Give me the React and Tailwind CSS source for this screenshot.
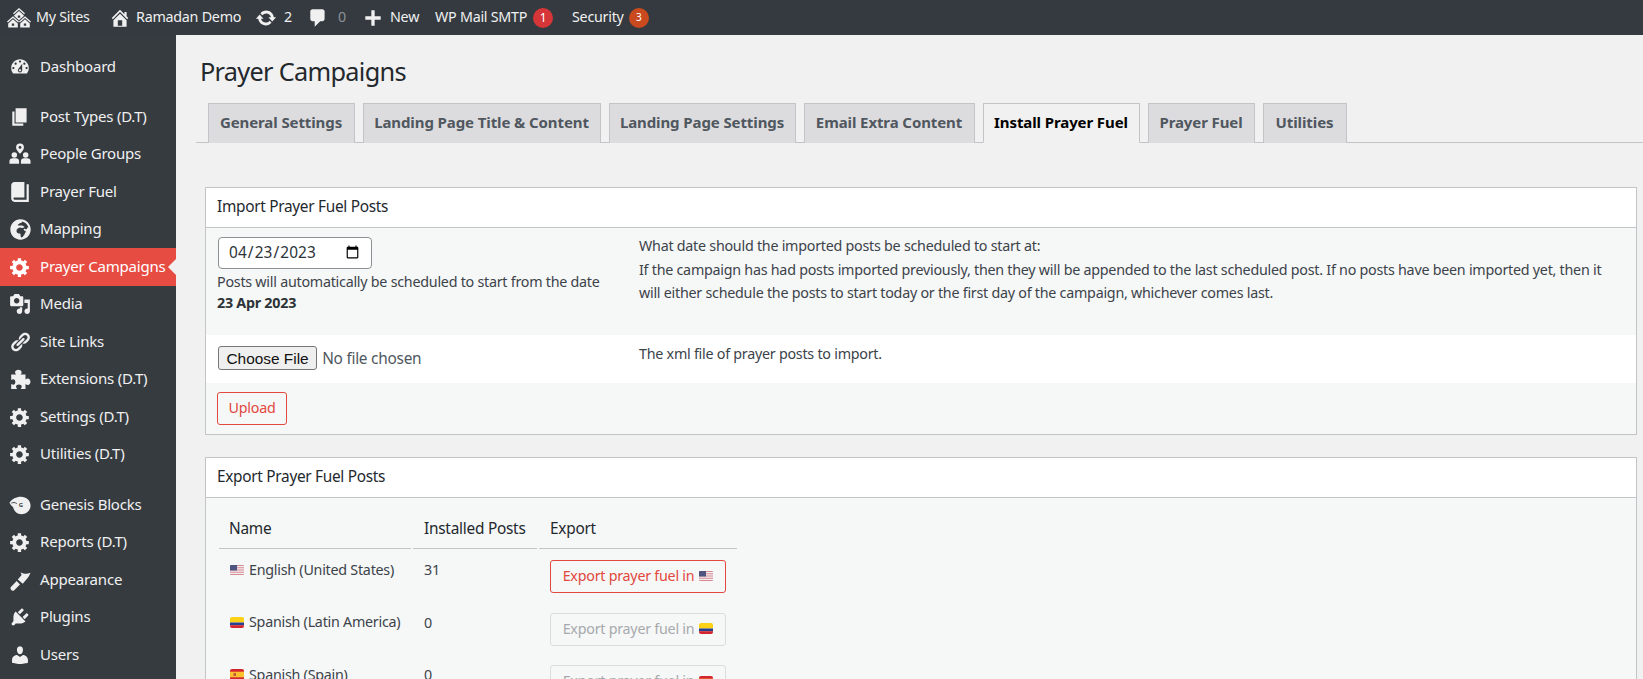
import React from "react";
import { FaGlobeAfrica } from "react-icons/fa";

const P = {
  multisite: "M14.27 6.87L10 3.14 5.73 6.87 5 6.14l5-4.38 5 4.38zM14 8.42l-4.05 3.43L6 8.38v-.74l4-3.5 4 3.5v.78zM11 9.7V8H9v1.7h2zm-1.73 4.03L5 10 .73 13.73 0 13l5-4.38L10 13zm10 0L15 10l-4.27 3.73L10 13l5-4.38L20 13zM5 11l4 3.5V18H1v-3.5zm10 0l4 3.5V18h-8v-3.5zM6 14.5H4v2h2v-2zm10 0h-2v2h2v-2z",
  home: "M16 8.5l1.53 1.53-1.06 1.06L10 4.62l-6.47 6.47-1.06-1.06L10 2.5l4 4v-2h2v4zm-6-2.46l6 5.99V18H4v-5.97zM12 17v-5H8v5h4z",
  update: "M10.2 3.28c3.53 0 6.43 2.61 6.92 6h2.08l-3.5 4-3.5-4h2.32c-.45-1.97-2.21-3.45-4.32-3.45-1.45 0-2.73.71-3.54 1.78L4.95 5.66C6.23 4.2 8.11 3.28 10.2 3.28zm-.4 13.44c-3.52 0-6.43-2.61-6.92-6H.8l3.5-4c1.17 1.33 2.33 2.67 3.5 4H5.48c.45 1.97 2.21 3.45 4.32 3.45 1.45 0 2.73-.71 3.54-1.78l1.71 1.95c-1.28 1.46-3.15 2.38-5.25 2.38z",
  comment: "M5 2h9c1.1 0 2 .9 2 2v7c0 1.1-.9 2-2 2h-2l-5 5v-5H5c-1.1 0-2-.9-2-2V4c0-1.1.9-2 2-2z",
  plus: "M17 8.5v3h-5.5V17h-3v-5.5H3v-3h5.5V3h3v5.5z",
  dashboard: "M3.76 16h12.48c1.1-1.37 1.76-3.11 1.76-5 0-4.42-3.58-8-8-8s-8 3.58-8 8c0 1.89.66 3.63 1.76 5zM10 4c.55 0 1 .45 1 1s-.45 1-1 1-1-.45-1-1 .45-1 1-1zM6 6c.55 0 1 .45 1 1s-.45 1-1 1-1-.45-1-1 .45-1 1-1zm8 0c.55 0 1 .45 1 1s-.45 1-1 1-1-.45-1-1 .45-1 1-1zm-5.37 5.55L12 7v6c0 1.1-.9 2-2 2s-2-.9-2-2c0-.57.24-1.08.63-1.45zM4 10c.55 0 1 .45 1 1s-.45 1-1 1-1-.45-1-1 .45-1 1-1zm12 0c.55 0 1 .45 1 1s-.45 1-1 1-1-.45-1-1 .45-1 1-1zm-5 3c0-.55-.45-1-1-1s-1 .45-1 1 .45 1 1 1 1-.45 1-1z",
  page: "M6 15V2h10v13H6zm-1 1h8v2H3V5h2v11z",
  book: "M16 3h2v16H5c-1.66 0-3-1.34-3-3V4c0-1.66 1.34-3 3-3h9v14H5c-.55 0-1 .45-1 1s.45 1 1 1h11V3z",
  gear: "M18 12h-2.18c-.17.7-.44 1.35-.81 1.93l1.54 1.54-2.1 2.1-1.54-1.54c-.58.36-1.23.63-1.91.79V19H8v-2.18c-.68-.16-1.33-.43-1.91-.79l-1.54 1.54-2.12-2.12 1.54-1.54c-.36-.58-.63-1.23-.79-1.91H1V9.03h2.17c.16-.7.44-1.35.8-1.94L2.43 5.55l2.1-2.1 1.54 1.54c.58-.37 1.24-.64 1.93-.81V2h3v2.18c.68.16 1.33.43 1.91.79l1.54-1.54 2.12 2.12-1.54 1.54c.36.59.64 1.24.8 1.94H18V12zm-8.5 1.5c1.66 0 3-1.34 3-3s-1.34-3-3-3-3 1.34-3 3 1.34 3 3 3z",
  media: "M13 11V4c0-.55-.45-1-1-1h-1.67L9 1H5L3.67 3H2c-.55 0-1 .45-1 1v7c0 .55.45 1 1 1h10c.55 0 1-.45 1-1zM7 4.5c1.38 0 2.5 1.12 2.5 2.5S8.38 9.5 7 9.5 4.5 8.38 4.5 7 5.62 4.5 7 4.5zM14 6h5v10.5c0 1.38-1.12 2.5-2.5 2.5S14 17.88 14 16.5s1.12-2.5 2.5-2.5c.17 0 .34.02.5.05V9h-3V6zm-4 8.05V13h2v3.5c0 1.38-1.12 2.5-2.5 2.5S7 17.88 7 16.5 8.12 14 9.5 14c.17 0 .34.02.5.05z",
  links: "M17.74 2.76c1.68 1.69 1.68 4.41 0 6.1l-1.53 1.52c-1.12 1.12-2.7 1.47-4.14 1.09l2.62-2.61.76-.77.76-.76c.84-.84.84-2.2 0-3.04-.84-.85-2.2-.85-3.04 0l-.77.76-3.38 3.38c-.37-1.44-.02-3.02 1.1-4.14l1.52-1.53c1.69-1.68 4.42-1.68 6.1 0zM8.59 13.43l5.34-5.34c.42-.42.42-1.1 0-1.52-.44-.43-1.13-.39-1.52 0l-5.34 5.34c-.42.42-.42 1.1 0 1.52.43.43 1.13.39 1.52 0zm-.76 2.29l4.14-4.15c.38 1.44.03 3.02-1.09 4.14l-1.52 1.53c-1.69 1.68-4.41 1.68-6.1 0-1.68-1.68-1.68-4.42 0-6.1l1.53-1.52c1.12-1.12 2.7-1.47 4.14-1.1l-4.14 4.15c-.85.84-.85 2.2 0 3.05.84.84 2.2.84 3.04 0z",
  plugin: "M13.11 4.36L9.87 7.6 8 5.73l3.24-3.24c.35-.34 1.05-.2 1.56.32.52.51.66 1.21.31 1.55zm-8 1.77l.91-1.12 9.01 9.01-1.19.84c-.71.71-2.63 1.16-3.82 1.16H6.14L4.9 17.26c-.59.59-1.54.59-2.12 0-.59-.58-.59-1.53 0-2.12l1.24-1.24v-3.88c0-1.13.52-3.13 1.09-3.89zm7.26 3.97l3.24-3.24c.34-.35 1.04-.21 1.55.31.52.51.66 1.21.31 1.56l-3.24 3.24z",
  user: "M10 9.25c-2.27 0-2.73-3.44-2.73-3.44C7 4.02 7.82 2 9.97 2c2.16 0 2.98 2.02 2.71 3.81 0 0-.41 3.44-2.68 3.44zm0 2.57L12.72 10c2.39 0 4.52 2.33 4.52 4.53v2.49s-3.65 1.13-7.24 1.13c-3.65 0-7.24-1.13-7.24-1.13v-2.49c0-2.25 1.94-4.48 4.56-4.48z",
  brush: "M1.5 16.5L7 11l3 3-5.5 5.5Q3 20 2 19 1 18 1.5 16.5zM8 9.5L11.5 5.5 10.5 3c3 1.500 5.500 2 9 .5-1 3-2.500 5-4.500 7l-2.500 3z",
  puzzle: "M2 6h4.500c-.7-.8-1-1.500-1-2.200C5.500 2.500 6.800 1.500 8.500 1.500s3 1 3 2.300c0 .7-.3 1.400-1 2.200H15v4.500c.8-.7 1.500-1 2.200-1 1.300 0 2.300 1.300 2.300 3s-1 3-2.300 3c-.7 0-1.400-.3-2.200-1V19h-4.300c.6-.8.9-1.500.9-2.100 0-1.200-1.100-1.900-2.600-1.900s-2.600.7-2.600 1.900c0 .6.3 1.300.9 2.100H2v-4.500c.8.5 1.300.7 1.800.7 1.200 0 2-1.100 2-2.500s-.8-2.500-2-2.500c-.5 0-1 .2-1.800.7z",
};

function Dash({ name, className = "w-[22px] h-[22px]" }) {
  return (
    <svg viewBox="0 0 20 20" fill="currentColor" className={className}>
      <path d={P[name]} />
    </svg>
  );
}

function PeopleIcon() {
  return (
    <svg viewBox="0 0 24 24" fill="currentColor" fillRule="evenodd" className="w-[22px] h-[22px]">
      <path d="M12 .5a4.3 4.3 0 0 1 4.3 4.3c0 2.4-2.5 5-4.3 7-1.8-2-4.3-4.6-4.3-7A4.3 4.3 0 0 1 12 .5zm0 2.7a1.6 1.6 0 1 0 0 3.2 1.6 1.6 0 0 0 0-3.2z" />
      <circle cx="5.8" cy="13" r="3" />
      <circle cx="18.2" cy="13" r="3" />
      <path d="M.5 22.500V20c0-2 1.500-3.300 3.500-3.300h3.600c2 0 3.400 1.300 3.400 3.300v2.500zM13 22.500V20c0-2 1.400-3.300 3.400-3.300H20c2 0 3.500 1.300 3.500 3.300v2.500z" />
    </svg>
  );
}

function GenesisIcon() {
  return (
    <svg viewBox="0 0 24 24" className="w-[22px] h-[22px]">
      <path fill="currentColor" d="M.5 9.500C3 5.500 8 3 13 3c6 0 10.500 4 10.500 9.500S19 22 13.500 22C9 22 5.500 19 4.500 14.500 3 13 1.500 11.500.5 9.500z" />
      <path fill="none" stroke="#363b40" strokeWidth="1" d="M2.500 10c2-1 4-1 6 .5" />
      <text x="13" y="14.500" fontSize="6.500" fontWeight="700" textAnchor="middle" fill="#363b40">G</text>
    </svg>
  );
}

function Flag({ code }) {
  if (code === "us") {
    return (
      <svg viewBox="0 0 14 10" className="w-[14px] h-[10px] shrink-0 rounded-[1px]">
        <rect width="14" height="10" fill="#f3eef0" />
        <path fill="#d88a92" d="M0 0h14v1.100H0zM0 2.200h14v1.100H0zM0 4.400h14v1.100H0zM0 6.700h14v1.100H0zM0 8.900h14V10H0z" />
        <rect width="7" height="5.500" fill="#4d5580" />
      </svg>
    );
  }
  if (code === "co") {
    return (
      <svg viewBox="0 0 14 11" className="w-[14px] h-[11px] shrink-0 rounded-[2px]">
        <rect width="14" height="5.500" fill="#fcd116" />
        <rect y="5.500" width="14" height="2.700" fill="#26418f" />
        <rect y="8.200" width="14" height="2.800" fill="#d3252f" />
      </svg>
    );
  }
  return (
    <svg viewBox="0 0 14 11" className="w-[14px] h-[11px] shrink-0 rounded-[2px]">
      <rect width="14" height="11" fill="#d3252f" />
      <rect y="2.700" width="14" height="5.600" fill="#fbc02d" />
      <rect x="3.500" y="4" width="2.500" height="3" fill="#c8553d" />
    </svg>
  );
}

const topItems = [
  { w: "w-[102px]", gap: "gap-[5px]", icon: "multisite", iconClass: "w-[24px] h-[24px]", label: "My Sites" },
  { w: "w-[146px]", gap: "gap-[5px]", icon: "home", iconClass: "w-[22px] h-[22px]", label: "Ramadan Demo" },
  { w: "w-[54px]", gap: "gap-[7px]", icon: "update", iconClass: "w-[22px] h-[22px]", label: "2" },
];

const menuTop = [
  { label: "Post Types (D.T)", icon: <Dash name="page" /> },
  { label: "People Groups", icon: <PeopleIcon /> },
  { label: "Prayer Fuel", icon: <Dash name="book" /> },
  { label: "Mapping", icon: <FaGlobeAfrica className="w-[21px] h-[21px]" /> },
  { label: "Prayer Campaigns", icon: <Dash name="gear" />, active: true },
  { label: "Media", icon: <Dash name="media" /> },
  { label: "Site Links", icon: <Dash name="links" /> },
  { label: "Extensions (D.T)", icon: <Dash name="puzzle" /> },
  { label: "Settings (D.T)", icon: <Dash name="gear" /> },
  { label: "Utilities (D.T)", icon: <Dash name="gear" /> },
];

const menuBottom = [
  { label: "Genesis Blocks", icon: <GenesisIcon /> },
  { label: "Reports (D.T)", icon: <Dash name="gear" /> },
  { label: "Appearance", icon: <Dash name="brush" /> },
  { label: "Plugins", icon: <Dash name="plugin" /> },
  { label: "Users", icon: <Dash name="user" /> },
];

const tabs = [
  { label: "General Settings", w: "w-[147px]" },
  { label: "Landing Page Title & Content", w: "w-[238px]" },
  { label: "Landing Page Settings", w: "w-[187px]" },
  { label: "Email Extra Content", w: "w-[171px]" },
  { label: "Install Prayer Fuel", w: "w-[157px]", active: true },
  { label: "Prayer Fuel", w: "w-[107px]" },
  { label: "Utilities", w: "w-[84px]" },
];

const languages = [
  { code: "us", name: "English (United States)", posts: "31", enabled: true },
  { code: "co", name: "Spanish (Latin America)", posts: "0" },
  { code: "es", name: "Spanish (Spain)", posts: "0" },
];

function MenuItem({ item }) {
  return (
    <div className={`flex items-center h-[37.5px] ${item.active ? "bg-[#e74c43] text-white" : ""}`}>
      <span className="w-[40px] flex justify-center shrink-0">{item.icon}</span>
      <span className="whitespace-nowrap pb-[2px]">{item.label}</span>
      {item.active && (
        <span className="ml-auto w-0 h-0 border-y-[8px] border-y-transparent border-r-[8px] border-r-[#f1f1f1]" />
      )}
    </div>
  );
}

function CardHeader({ children }) {
  return (
    <div className="h-[40px] flex items-center px-[11px] pb-[2px] bg-white border-b border-[#c3c4c7] text-[15.4px] tracking-[-0.3px] text-[#23282d]">
      {children}
    </div>
  );
}

export default function App() {
  return (
    <div className="h-[679px] overflow-hidden flex flex-col bg-[#f1f1f1] text-[14.3px] tracking-[-0.25px] text-[#3c434a] font-['Noto_Sans',sans-serif]">
      {/* admin bar */}
      <div className="h-[35px] shrink-0 flex items-center pl-[7px] bg-[#343a3f] text-[#f0f0f1]">
        {topItems.map((t) => (
          <div key={t.label} className={`${t.w} ${t.gap} flex items-center whitespace-nowrap`}>
            <Dash name={t.icon} className={t.iconClass} />
            <span className="pb-[2px]">{t.label}</span>
          </div>
        ))}
        <div className="w-[55px] flex items-center gap-[9px]">
          <Dash name="comment" className="w-[22px] h-[22px] -ml-[2px]" />
          <span className="pb-[2px] text-[#8c9096]">0</span>
        </div>
        <div className="w-[71px] flex items-center gap-[6px]">
          <Dash name="plus" className="w-[22px] h-[22px] -ml-[2px]" />
          <span className="pb-[2px]">New</span>
        </div>
        <div className="w-[137px] flex items-center gap-[6px] whitespace-nowrap">
          <span className="pb-[2px]">WP Mail SMTP</span>
          <span className="w-[20px] h-[20px] rounded-full bg-[#d63638] text-white text-[12px] flex items-center justify-center">1</span>
        </div>
        <div className="flex items-center gap-[5px]">
          <span className="pb-[2px]">Security</span>
          <span className="w-[20px] h-[20px] rounded-full bg-[#ca4a1f] text-white text-[10px] flex items-center justify-center">3</span>
        </div>
      </div>

      <div className="flex flex-1 min-h-0">
        {/* sidebar */}
        <aside className="w-[176px] shrink-0 bg-[#363b40] text-[#f0f0f1] text-[15px] tracking-[-0.2px] pt-[13px]">
          <MenuItem item={{ label: "Dashboard", icon: <Dash name="dashboard" /> }} />
          <div className="h-[12.5px]" />
          {menuTop.map((m) => (
            <MenuItem key={m.label} item={m} />
          ))}
          <div className="h-[13px]" />
          {menuBottom.map((m) => (
            <MenuItem key={m.label} item={m} />
          ))}
        </aside>

        {/* content */}
        <main className="flex-1 min-w-0 pl-[22px] pr-[6px]">
          <h1 className="h-[68px] flex items-center pl-[2px] pt-[6px] text-[25.3px] text-[#23282d] tracking-[-0.7px]">Prayer Campaigns</h1>

          <div className="flex gap-[8px] pl-[11.5px] -mr-[6px] -ml-[2px] h-[40px] border-b border-[#c3c4c7]">
            {tabs.map((t) => (
              <div
                key={t.label}
                className={`${t.w} h-[40px] pb-[2px] shrink-0 flex items-center justify-center whitespace-nowrap border border-[#c3c4c7] font-bold text-[15px] tracking-[-0.1px] ${
                  t.active ? "bg-[#f1f1f1] border-b-[#f1f1f1] text-black" : "bg-[#dcdcde] border-b-0 h-[39px] text-[#50575e]"
                }`}
              >
                {t.label}
              </div>
            ))}
          </div>

          {/* import card */}
          <section className="mt-[44px] ml-[7px] border border-[#c3c4c7] bg-[#f6f7f7]">
            <CardHeader>Import Prayer Fuel Posts</CardHeader>
            <div className="flex h-[107px]">
              <div className="w-[433px] shrink-0 pl-[11px] pt-[9px]">
                <input
                  type="date"
                  defaultValue="2023-04-23"
                  className="block ml-[1px] w-[154px] h-[32px] px-[9px] bg-white border border-[#8c8f94] rounded-[4px] text-[#2c3338] text-[15.4px] tracking-[0.1px]"
                />
                <p className="mt-[2px] leading-[21px] whitespace-nowrap">Posts will automatically be scheduled to start from the date</p>
                <p className="leading-[21px] font-bold text-[#2c3338]">23 Apr 2023</p>
              </div>
              <div className="flex-1 pr-[14px] pt-[6px] leading-[23.5px]">
                <p>What date should the imported posts be scheduled to start at:</p>
                <p>
                  If the campaign has had posts imported previously, then they will be appended to the last scheduled post. If no posts have been imported yet, then it will either schedule the posts to start today or the first day of the campaign, whichever comes last.
                </p>
              </div>
            </div>
            <div className="flex h-[48px] bg-white">
              <div className="w-[433px] shrink-0 pl-[12px] pt-[11px]">
                <input
                  type="file"
                  className="text-[#50575e] text-[15.4px] tracking-[-0.25px] file:h-[24px] file:px-[7.5px] file:mr-[5px] file:bg-[#efefef] file:border file:border-solid file:border-[#767676] file:rounded-[3px] file:tracking-normal file:text-[#111] file:font-['Liberation_Sans',sans-serif]"
                />
              </div>
              <p className="pt-[8px]">The xml file of prayer posts to import.</p>
            </div>
            <div className="h-[51px] pl-[11px] pt-[9px]">
              <button className="h-[33px] w-[70px] pb-[2px] bg-[#f6f7f7] border border-[#e2483d] rounded-[3px] text-[#e2483d]">Upload</button>
            </div>
          </section>

          {/* export card */}
          <section className="mt-[22px] ml-[7px] border border-[#c3c4c7] bg-[#f6f7f7]">
            <CardHeader>Export Prayer Fuel Posts</CardHeader>
            <div className="pl-[11px] pt-[11px]">
              <table className="border-separate border-spacing-x-[2px] border-spacing-y-0 table-fixed w-[522px]">
                <thead>
                  <tr className="text-left text-[15.4px] tracking-[-0.25px] text-[#23282d]">
                    <th className="w-[192px] h-[40px] pl-[10px] font-normal border-b border-[#c3c4c7]">Name</th>
                    <th className="w-[124px] h-[40px] pl-[11px] font-normal border-b border-[#c3c4c7] whitespace-nowrap">Installed Posts</th>
                    <th className="w-[198px] h-[40px] pl-[11px] font-normal border-b border-[#c3c4c7]">Export</th>
                  </tr>
                </thead>
                <tbody>
                  {languages.map((l) => (
                    <tr key={l.code}>
                      <td className="pl-[11px] pt-[10px] pb-[9.5px] align-top">
                        <span className="flex items-center gap-[5px] h-[21px] whitespace-nowrap">
                          <Flag code={l.code} />
                          {l.name}
                        </span>
                      </td>
                      <td className="pl-[11px] pt-[10px] pb-[9.5px] align-top leading-[21px]">{l.posts}</td>
                      <td className="pl-[11px] pt-[11px] pb-[8.5px] align-top">
                        <button
                          className={`h-[33px] w-[176px] pb-[1px] flex items-center justify-center gap-[5px] rounded-[3px] border whitespace-nowrap ${
                            l.enabled ? "border-[#e2483d] text-[#e2483d]" : "border-[#dcdcde] text-[#a7aaad]"
                          }`}
                        >
                          Export prayer fuel in <Flag code={l.code} />
                        </button>
                      </td>
                    </tr>
                  ))}
                </tbody>
              </table>
            </div>
          </section>
        </main>
      </div>
    </div>
  );
}
